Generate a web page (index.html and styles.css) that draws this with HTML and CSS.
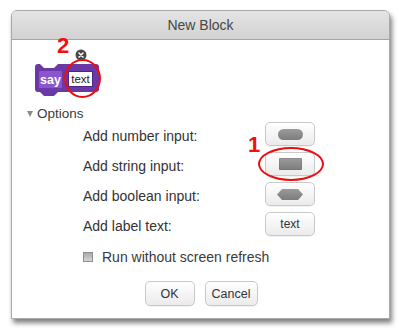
FILE: index.html
```html
<!DOCTYPE html>
<html>
<head>
<meta charset="utf-8">
<link rel="stylesheet" href="styles.css">
</head>
<body>
<div class="stage">
  <div class="dialog">
    <div class="titlebar">New Block</div>
    <div class="content">
      <div class="preview">
        <svg class="block" width="65" height="34" viewBox="0 0 65 34">
          <path d="M0,5 a3,3 0 0 1 3,-3 L5,2 L9,6 L19,6 L23,2 L61,2 a3,3 0 0 1 3,3 L64,27 a3,3 0 0 1 -3,3 L23,30 L19,34 L9,34 L5,30 L3,30 a3,3 0 0 1 -3,-3 Z" fill="#6a39a7"/>
          <rect x="4" y="9" width="23" height="17" rx="1" fill="#8b55cf"/>
          <text x="15.5" y="22" text-anchor="middle" class="say">say</text>
          <rect x="33.5" y="9.5" width="24" height="15" fill="#ffffff" stroke="#4b2683" stroke-width="1"/>
          <text x="45.5" y="21" text-anchor="middle" class="intext">text</text>
        </svg>
        <svg class="close" width="12" height="12" viewBox="0 0 12 12">
          <circle cx="6" cy="6" r="5.5" fill="#484848"/>
          <path d="M4,4 L8,8 M8,4 L4,8" stroke="#ffffff" stroke-width="1.5" stroke-linecap="round"/>
        </svg>
      </div>
      <div class="options-toggle"><span class="tri"></span>Options</div>
      <div class="inputs">
        <span class="lbl">Add number input:</span>
        <button class="btn"><span class="shape pill"></span></button>
        <span class="lbl">Add string input:</span>
        <button class="btn"><span class="shape rect"></span></button>
        <span class="lbl">Add boolean input:</span>
        <button class="btn"><svg width="26" height="11" viewBox="0 0 26 11"><defs><linearGradient id="g" x1="0" y1="0" x2="0" y2="1"><stop offset="0" stop-color="#9a9a9a"/><stop offset="1" stop-color="#7c7c7c"/></linearGradient></defs><polygon points="0,5.5 5,0 21,0 26,5.5 21,11 5,11" fill="url(#g)"/></svg></button>
        <span class="lbl">Add label text:</span>
        <button class="btn txt">text</button>
      </div>
      <div class="refresh"><span class="check"></span>Run without screen refresh</div>
      <div class="actions">
        <button class="btn act ok">OK</button>
        <button class="btn act">Cancel</button>
      </div>
    </div>
  </div>
  <span class="num n2">2</span>
  <span class="num n1">1</span>
  <span class="ring r2"></span>
  <span class="ring r1"></span>
</div>
</body>
</html>
```
FILE: styles.css
```css
html, body {
  margin: 0;
  padding: 0;
  background: #fff;
}
.stage {
  position: relative;
  width: 409px;
  height: 336px;
  overflow: hidden;
  font-family: "Liberation Sans", Arial, sans-serif;
  color: #333;
}
.dialog {
  position: absolute;
  left: 11px;
  top: 10px;
  width: 377px;
  background: #fff;
  border: 1px solid #a9a9a9;
  border-radius: 6px 6px 0 0;
  box-shadow: 2px 4px 5px rgba(0,0,0,0.5);
}
.titlebar {
  height: 28px;
  line-height: 29px;
  text-align: center;
  font-size: 14px;
  color: #474747;
  background: linear-gradient(#e4e4e4, #d2d2d2);
  border-bottom: 1px solid #a5a5a5;
  border-radius: 5px 5px 0 0;
}
.content {
  padding: 0 0 12px 0;
}
.preview {
  position: relative;
  height: 43px;
  padding: 22px 0 0 23px;
}
.block {
  display: block;
}
.say {
  font-family: "Liberation Sans", Arial, sans-serif;
  font-weight: bold;
  font-size: 12.5px;
  fill: #ffffff;
}
.intext {
  font-family: "Liberation Sans", Arial, sans-serif;
  font-size: 11.5px;
  fill: #222222;
}
.close {
  position: absolute;
  left: 63px;
  top: 9px;
}
.options-toggle {
  display: flex;
  align-items: center;
  height: 16px;
  font-size: 13.5px;
  padding-left: 15px;
  color: #3a3a3a;
}
.tri {
  width: 0;
  height: 0;
  border-left: 3.5px solid transparent;
  border-right: 3.5px solid transparent;
  border-top: 6px solid #8a8a8a;
  margin-right: 4px;
  margin-top: 2px;
}
.inputs {
  display: grid;
  grid-template-columns: 182px 50px;
  grid-auto-rows: 24px;
  row-gap: 6px;
  align-items: center;
  margin-top: 1px;
  padding-left: 71px;
}
.lbl {
  font-size: 14px;
  color: #333;
  padding-top: 3px;
}
.btn {
  font-family: "Liberation Sans", Arial, sans-serif;
  width: 50px;
  height: 24px;
  padding: 0;
  margin: 0;
  display: flex;
  align-items: center;
  justify-content: center;
  border: 1px solid #c9c9c9;
  border-radius: 5px;
  background: linear-gradient(#ffffff, #ebebeb);
  box-shadow: 0 1px 0 rgba(0,0,0,0.05);
  color: #333;
}
.shape {
  display: block;
  background: linear-gradient(#9b9b9b, #7d7d7d);
}
.pill {
  width: 25px;
  height: 11px;
  border-radius: 6px;
}
.rect {
  width: 23px;
  height: 12px;
  border-radius: 1px;
  box-shadow: inset 0 0 0 1px rgba(0,0,0,0.08);
}
.txt {
  font-size: 12px;
}
.refresh {
  display: flex;
  align-items: center;
  height: 16px;
  margin-top: 13px;
  padding-left: 71px;
  font-size: 14px;
  color: #3a3a3a;
}
.check {
  width: 8px;
  height: 8px;
  border: 1px solid #8e8e8e;
  background: linear-gradient(#a9a9a9, #d6d6d6);
  margin-right: 9px;
}
.actions {
  display: flex;
  justify-content: center;
  gap: 10px;
  margin-top: 16px;
  padding-left: 1px;
}
.act {
  height: 25px;
  font-size: 12.5px;
}
.act.ok {
  width: 50px;
}
.act:not(.ok) {
  width: 53px;
}
.num {
  position: absolute;
  font-weight: bold;
  font-size: 22px;
  line-height: 20px;
  color: #f01010;
  font-family: "Liberation Sans", Arial, sans-serif;
}
.n2 {
  left: 57px;
  top: 36px;
}
.n1 {
  left: 248px;
  top: 135px;
}
.ring {
  position: absolute;
  border: 2px solid #e81010;
  border-radius: 50%;
}
.r2 {
  left: 64px;
  top: 59px;
  width: 33px;
  height: 35px;
}
.r1 {
  left: 258px;
  top: 147px;
  width: 62px;
  height: 30px;
}
```
